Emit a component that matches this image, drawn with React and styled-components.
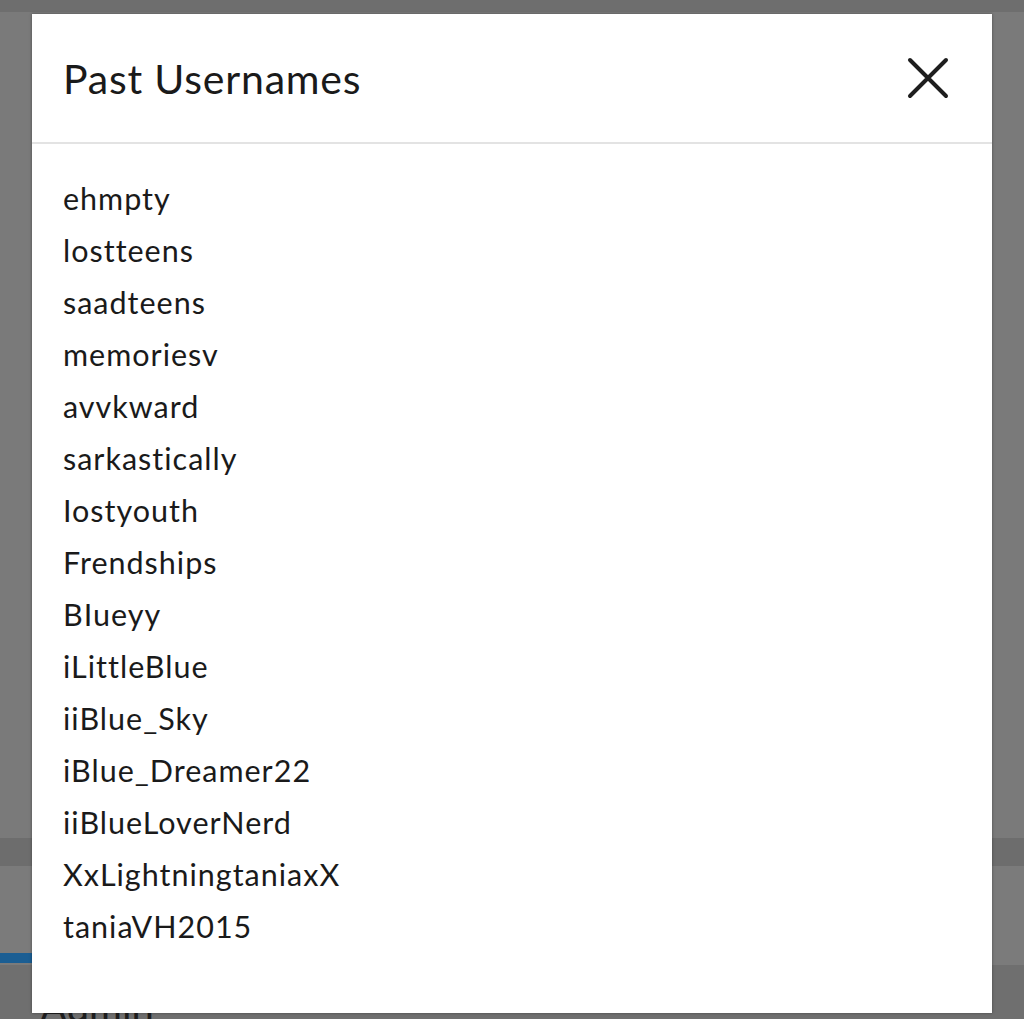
import React from "react";
import styled, { createGlobalStyle } from "styled-components";

const Global = createGlobalStyle`
  html, body { margin: 0; padding: 0; }
  body { overflow: hidden; background: #7a7a7a; font-family: Lato, "Noto Sans", sans-serif; }
`;

const Page = styled.div`
  position: relative;
  width: 1024px;
  height: 1019px;
  overflow: hidden;
  display: flex;
  flex-direction: column;
  background: #7a7a7a;
`;

const TopStrip = styled.div`
  height: 12px;
  flex-shrink: 0;
  background: #6e6e6e;
`;

const Fill = styled.div`
  height: ${(p) => p.$h}px;
  flex-shrink: 0;
  background: ${(p) => p.$bg};
  display: flex;
  flex-direction: column;
  justify-content: flex-end;
`;

const TabBar = styled.div`
  height: 10px;
  width: 40px;
  background: #1b5e93;
  margin-bottom: 2px;
`;

const Footer = styled.div`
  flex: 1;
  min-height: 0;
  overflow: hidden;
  background: #6f6f6f;
  padding: 18px 0 0 40px;
`;

const FooterText = styled.div`
  font-family: Lato, sans-serif;
  font-size: 40px;
  line-height: 48px;
  color: #1e1e1e;
`;

const Modal = styled.div`
  position: absolute;
  top: 14px;
  left: 32px;
  width: 960px;
  height: 999px;
  background: #ffffff;
  box-shadow: 0 0 3px rgba(0, 0, 0, 0.35);
  display: flex;
  flex-direction: column;
`;

const Header = styled.div`
  height: 128px;
  flex-shrink: 0;
  border-bottom: 2px solid #e3e3e3;
  display: flex;
  align-items: center;
  justify-content: space-between;
  padding: 0 40px 0 31px;
`;

const Title = styled.h1`
  margin: 0;
  font-family: Lato, sans-serif;
  font-weight: 400;
  font-size: 41px;
  color: #1a1a1a;
  letter-spacing: 0.8px;
`;

const CloseButton = styled.button`
  border: 0;
  background: none;
  padding: 0;
  width: 48px;
  height: 48px;
  display: flex;
  align-items: center;
  justify-content: center;
  cursor: pointer;
`;

const List = styled.ul`
  list-style: none;
  margin: 0;
  padding: 28px 31px 0;
`;

const Item = styled.li`
  font-family: Lato, sans-serif;
  font-size: 30.5px;
  line-height: 52px;
  letter-spacing: 1px;
  color: #1a1a1a;
`;

const names = [
  "ehmpty",
  "lostteens",
  "saadteens",
  "memoriesv",
  "avvkward",
  "sarkastically",
  "Iostyouth",
  "Frendships",
  "BIueyy",
  "iLittleBlue",
  "iiBlue_Sky",
  "iBlue_Dreamer22",
  "iiBlueLoverNerd",
  "XxLightningtaniaxX",
  "taniaVH2015",
];

export default function App() {
  return (
    <>
      <Global />
      <Page>
        <TopStrip />
        <Fill $h={826} $bg="#7a7a7a" />
        <Fill $h={28} $bg="#6d6d6d" />
        <Fill $h={99} $bg="#7b7b7b">
          <TabBar />
        </Fill>
        <Footer>
          <FooterText>Admin</FooterText>
        </Footer>
        <Modal>
          <Header>
            <Title>Past Usernames</Title>
            <CloseButton aria-label="Close">
              <svg width="42" height="42" viewBox="0 0 42 42">
                <path
                  d="M3 3 L39 39 M39 3 L3 39"
                  stroke="#1e1e1e"
                  strokeWidth="4"
                  strokeLinecap="round"
                  fill="none"
                />
              </svg>
            </CloseButton>
          </Header>
          <List>
            {names.map((n) => (
              <Item key={n}>{n}</Item>
            ))}
          </List>
        </Modal>
      </Page>
    </>
  );
}
